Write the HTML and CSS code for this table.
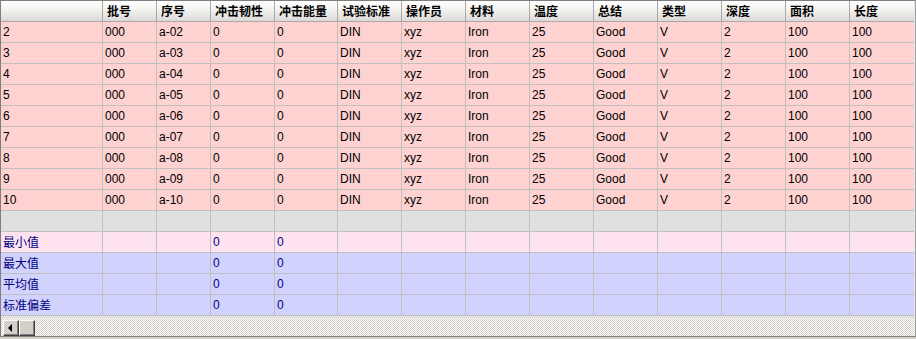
FILE: index.html
```html
<!DOCTYPE html>
<html>
<head>
<meta charset="utf-8">
<link rel="stylesheet" href="styles.css">
</head>
<body>
<div class="grid">
  <table class="tbl">
    <thead>
      <tr>
        <th class="c0"></th><th class="c1">批号</th><th class="c2">序号</th><th class="c3">冲击韧性</th><th class="c4">冲击能量</th><th class="cn">试验标准</th><th class="cn">操作员</th><th class="cn">材料</th><th class="cn">温度</th><th class="cn">总结</th><th class="cn">类型</th><th class="cn">深度</th><th class="cn">面积</th><th class="cn">长度</th>
      </tr>
    </thead>
    <tbody>
      <tr class="data"><td>2</td><td>000</td><td>a-02</td><td>0</td><td>0</td><td>DIN</td><td>xyz</td><td>Iron</td><td>25</td><td>Good</td><td>V</td><td>2</td><td>100</td><td>100</td></tr>
      <tr class="data"><td>3</td><td>000</td><td>a-03</td><td>0</td><td>0</td><td>DIN</td><td>xyz</td><td>Iron</td><td>25</td><td>Good</td><td>V</td><td>2</td><td>100</td><td>100</td></tr>
      <tr class="data"><td>4</td><td>000</td><td>a-04</td><td>0</td><td>0</td><td>DIN</td><td>xyz</td><td>Iron</td><td>25</td><td>Good</td><td>V</td><td>2</td><td>100</td><td>100</td></tr>
      <tr class="data"><td>5</td><td>000</td><td>a-05</td><td>0</td><td>0</td><td>DIN</td><td>xyz</td><td>Iron</td><td>25</td><td>Good</td><td>V</td><td>2</td><td>100</td><td>100</td></tr>
      <tr class="data"><td>6</td><td>000</td><td>a-06</td><td>0</td><td>0</td><td>DIN</td><td>xyz</td><td>Iron</td><td>25</td><td>Good</td><td>V</td><td>2</td><td>100</td><td>100</td></tr>
      <tr class="data"><td>7</td><td>000</td><td>a-07</td><td>0</td><td>0</td><td>DIN</td><td>xyz</td><td>Iron</td><td>25</td><td>Good</td><td>V</td><td>2</td><td>100</td><td>100</td></tr>
      <tr class="data"><td>8</td><td>000</td><td>a-08</td><td>0</td><td>0</td><td>DIN</td><td>xyz</td><td>Iron</td><td>25</td><td>Good</td><td>V</td><td>2</td><td>100</td><td>100</td></tr>
      <tr class="data"><td>9</td><td>000</td><td>a-09</td><td>0</td><td>0</td><td>DIN</td><td>xyz</td><td>Iron</td><td>25</td><td>Good</td><td>V</td><td>2</td><td>100</td><td>100</td></tr>
      <tr class="data"><td>10</td><td>000</td><td>a-10</td><td>0</td><td>0</td><td>DIN</td><td>xyz</td><td>Iron</td><td>25</td><td>Good</td><td>V</td><td>2</td><td>100</td><td>100</td></tr>
      <tr class="blank"><td></td><td></td><td></td><td></td><td></td><td></td><td></td><td></td><td></td><td></td><td></td><td></td><td></td><td></td></tr>
      <tr class="sum min"><td>最小值</td><td></td><td></td><td>0</td><td>0</td><td></td><td></td><td></td><td></td><td></td><td></td><td></td><td></td><td></td></tr>
      <tr class="sum"><td>最大值</td><td></td><td></td><td>0</td><td>0</td><td></td><td></td><td></td><td></td><td></td><td></td><td></td><td></td><td></td></tr>
      <tr class="sum"><td>平均值</td><td></td><td></td><td>0</td><td>0</td><td></td><td></td><td></td><td></td><td></td><td></td><td></td><td></td><td></td></tr>
      <tr class="sum"><td>标准偏差</td><td></td><td></td><td>0</td><td>0</td><td></td><td></td><td></td><td></td><td></td><td></td><td></td><td></td><td></td></tr>
    </tbody>
  </table>
  <div class="gap"></div>
  <div class="hscroll">
    <div class="btn arrow"><span class="tri"></span></div>
    <div class="btn thumb"></div>
  </div>
</div>
</body>
</html>
```

FILE: styles.css
```css
html, body {
  margin: 0;
  padding: 0;
  background: #d4d0c8;
}
body {
  width: 916px;
  height: 339px;
  overflow: hidden;
  font-family: "Liberation Sans", "Noto Sans CJK SC", sans-serif;
  font-size: 12px;
}
.grid {
  width: 914px;
  background: #e6e6e6;
  border-top: 1px solid #7f7f7f;
  border-left: 1px solid #7f7f7f;
  border-bottom: 1px solid #7f7f7f;
  border-right: 1px solid #a0a0a0;
}
.tbl {
  border-collapse: separate;
  border-spacing: 0;
  table-layout: fixed;
  width: 913px;
}
.tbl th, .tbl td {
  box-sizing: border-box;
  height: 21px;
  padding: 0 0 0 2px;
  border-right: 1px solid #c0c0c0;
  border-bottom: 1px solid #c0c0c0;
  text-align: left;
  white-space: nowrap;
  overflow: hidden;
  line-height: 20px;
}
.tbl th {
  font-family: "Noto Sans CJK SC", sans-serif;
  font-weight: bold;
  font-size: 12px;
  color: #000;
  padding-left: 4px;
  background: linear-gradient(#ffffff 0%, #f4f4f2 40%, #dcdad6 100%);
  border-right: 1px solid #a8a8a8;
  border-bottom: 1px solid #a8a8a8;
}
.tbl th.c0 { width: 102px; }
.tbl th.c1 { width: 54px; }
.tbl th.c2 { width: 54px; }
.tbl th.c3 { width: 64px; }
.tbl th.c4 { width: 63px; }
.tbl th.cn { width: 64px; }
.tbl th:last-child, .tbl td:last-child { border-right: none; }
.data td { background: #ffd2d2; color: #000; }
.blank td { background: #e0e0e0; }
.sum td {
  background: #d2d2ff;
  color: #000080;
}
.sum td:first-child {
  font-family: "Noto Sans CJK SC", sans-serif;
  font-size: 12px;
}
.sum.min td { background: #ffe2f0; }
.gap {
  height: 2px;
  background: #e2e2e2;
}
.hscroll {
  height: 18px;
  display: flex;
  align-items: flex-end;
  padding-left: 2px;
  background-color: #ffffff;
  background-image: repeating-conic-gradient(#d4d0c8 0 25%, #ffffff 0 50%);
  background-size: 2px 2px;
}
.btn {
  box-sizing: border-box;
  width: 16px;
  height: 16px;
  background: #d4d0c8;
  border-top: 1px solid #ffffff;
  border-left: 1px solid #ffffff;
  border-right: 1px solid #404040;
  border-bottom: 1px solid #404040;
  box-shadow: inset -1px -1px 0 #808080;
  display: flex;
  align-items: center;
  justify-content: center;
}
.tri {
  width: 0;
  height: 0;
  border-top: 4px solid transparent;
  border-bottom: 4px solid transparent;
  border-right: 4px solid #000;
  margin-left: -2px;
}
```
